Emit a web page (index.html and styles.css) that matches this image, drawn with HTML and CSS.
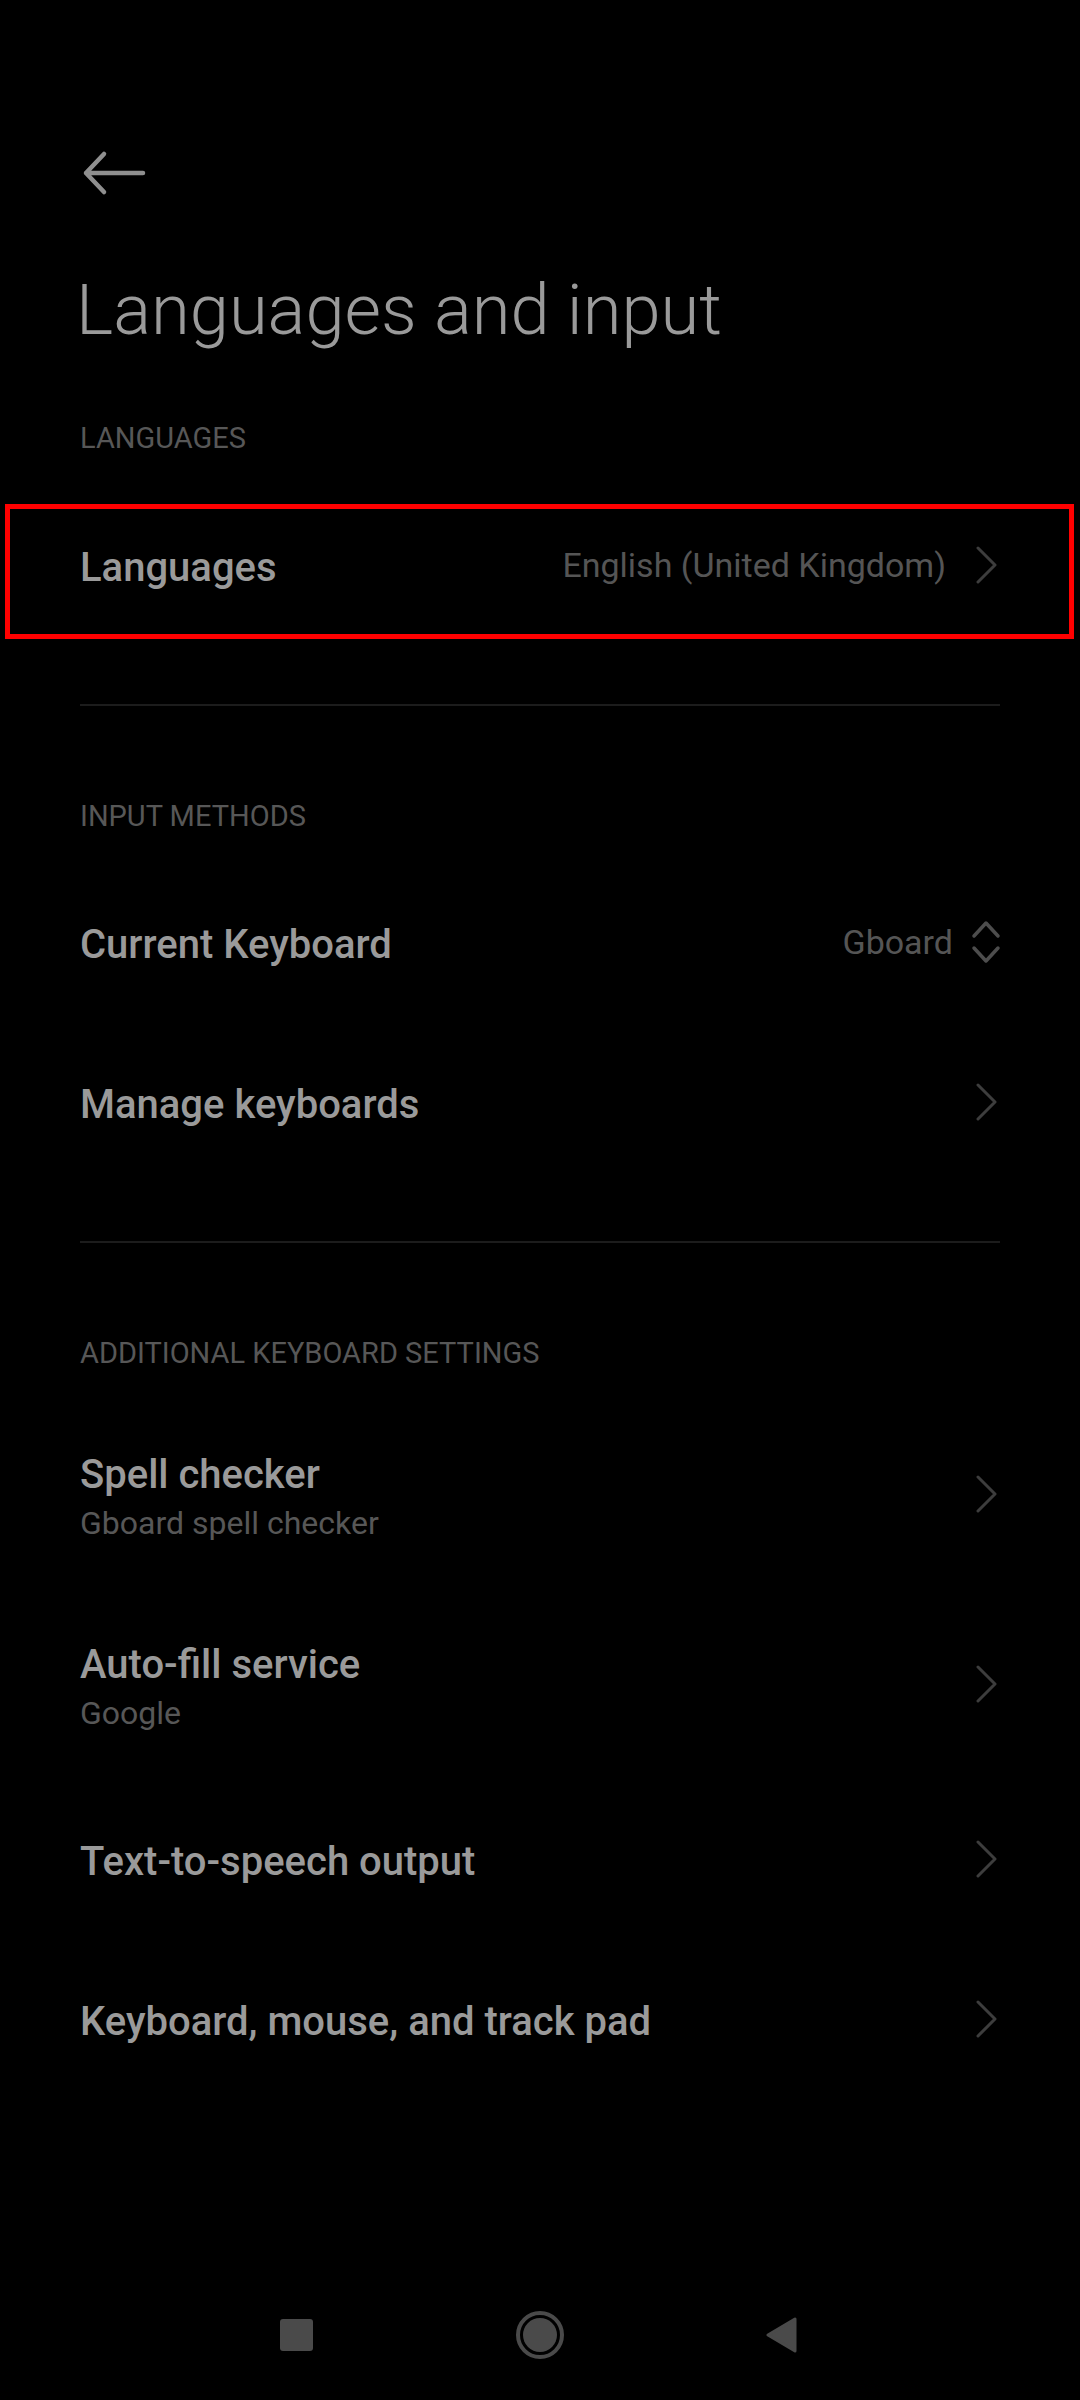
FILE: index.html
```html
<!DOCTYPE html>
<html lang="en">
<head>
  <meta charset="UTF-8" />
  <meta name="viewport" content="width=device-width, initial-scale=1.0"/>
  <title>Languages and input</title>
  <link rel="stylesheet" href="styles.css">
</head>
<body>

<div class="page">
  <div class="toolbar">
    <svg class="back" width="64" height="48" viewBox="0 0 64 48">
      <path d="M22 5 L4 24 L22 43 M4 24 H61" fill="none" stroke="#8f8f8f" stroke-width="4.5" stroke-linecap="round" stroke-linejoin="round"/>
    </svg>
  </div>

  <h1 class="title">Languages and input</h1>

  <div class="group-title first">LANGUAGES</div>
  <div class="row marked">
    <div class="row-text">
      <div class="row-name">Languages</div>
    </div>
    <div class="row-value">English (United Kingdom)</div>
    <svg class="chevron" width="22" height="38" viewBox="0 0 22 38">
      <path d="M2 2 L19 19 L2 36" fill="none" stroke="#3d3d3d" stroke-width="3" stroke-linecap="round" stroke-linejoin="round"/>
    </svg>
  </div>

  <div class="divider"></div>

  <div class="group-title">INPUT METHODS</div>
  <div class="row">
    <div class="row-text">
      <div class="row-name">Current Keyboard</div>
    </div>
    <div class="row-value short">Gboard</div>
    <svg class="updown" width="30" height="44" viewBox="0 0 30 44">
      <path d="M3 16 L15 3 L27 16 M3 28 L15 41 L27 28" fill="none" stroke="#4d4d4d" stroke-width="3.5" stroke-linecap="round" stroke-linejoin="round"/>
    </svg>
  </div>
  <div class="row">
    <div class="row-text">
      <div class="row-name">Manage keyboards</div>
    </div>
    <svg class="chevron" width="22" height="38" viewBox="0 0 22 38">
      <path d="M2 2 L19 19 L2 36" fill="none" stroke="#3d3d3d" stroke-width="3" stroke-linecap="round" stroke-linejoin="round"/>
    </svg>
  </div>

  <div class="divider"></div>

  <div class="group-title">ADDITIONAL KEYBOARD SETTINGS</div>
  <div class="row tall">
    <div class="row-text">
      <div class="row-name">Spell checker</div>
      <div class="row-sub">Gboard spell checker</div>
    </div>
    <svg class="chevron" width="22" height="38" viewBox="0 0 22 38">
      <path d="M2 2 L19 19 L2 36" fill="none" stroke="#3d3d3d" stroke-width="3" stroke-linecap="round" stroke-linejoin="round"/>
    </svg>
  </div>
  <div class="row tall">
    <div class="row-text">
      <div class="row-name">Auto-fill service</div>
      <div class="row-sub">Google</div>
    </div>
    <svg class="chevron" width="22" height="38" viewBox="0 0 22 38">
      <path d="M2 2 L19 19 L2 36" fill="none" stroke="#3d3d3d" stroke-width="3" stroke-linecap="round" stroke-linejoin="round"/>
    </svg>
  </div>
  <div class="row">
    <div class="row-text">
      <div class="row-name">Text-to-speech output</div>
    </div>
    <svg class="chevron" width="22" height="38" viewBox="0 0 22 38">
      <path d="M2 2 L19 19 L2 36" fill="none" stroke="#3d3d3d" stroke-width="3" stroke-linecap="round" stroke-linejoin="round"/>
    </svg>
  </div>
  <div class="row">
    <div class="row-text">
      <div class="row-name">Keyboard, mouse, and track pad</div>
    </div>
    <svg class="chevron" width="22" height="38" viewBox="0 0 22 38">
      <path d="M2 2 L19 19 L2 36" fill="none" stroke="#3d3d3d" stroke-width="3" stroke-linecap="round" stroke-linejoin="round"/>
    </svg>
  </div>

  <div class="navbar">
    <div class="nav-btn"><span class="nav-square"></span></div>
    <div class="nav-btn"><span class="nav-home"><span class="nav-dot"></span></span></div>
    <div class="nav-btn">
      <svg width="36" height="40" viewBox="0 0 36 40">
        <path d="M29 4 L29 36 L2 20 Z" fill="#4a4a4a" stroke="#4a4a4a" stroke-width="3" stroke-linejoin="round"/>
      </svg>
    </div>
  </div>
</div>

</body>
</html>
```

FILE: styles.css
```css
* {
  box-sizing: border-box;
  margin: 0;
  padding: 0;
}

body {
  background-color: #000000;
  color: #9a9a9a;
  font-family: 'Roboto', 'Noto Sans', sans-serif;
}

.page {
  min-height: 2400px;
  display: flex;
  flex-direction: column;
}

.toolbar {
  padding: 149px 0 0 82px;
  height: 197px;
}

.back {
  display: block;
}

.title {
  margin-top: 70px;
  padding-left: 76px;
  font-size: 70.5px;
  font-weight: 300;
  line-height: 86px;
  color: #9a9a9a;
}

.group-title {
  padding: 92px 80px 0;
  margin-bottom: 28px;
  font-size: 29px;
  line-height: 36px;
  color: #575757;
}

.group-title.first {
  padding-top: 67px;
  margin-bottom: 29px;
}

.row {
  position: relative;
  height: 160px;
  padding: 0 80px;
  display: flex;
  align-items: center;
}

.row.tall {
  height: 190px;
}

.row-text {
  flex: 1;
  padding-top: 5px;
}

.row-name {
  font-size: 40px;
  font-weight: 500;
  line-height: 46px;
  color: #9a9a9a;
}

.row-sub {
  margin-top: 6px;
  font-size: 32px;
  line-height: 38px;
  color: #575757;
}

.row-value {
  margin-right: 30px;
  font-size: 34px;
  color: #555555;
}

.row-value.short {
  margin-right: 18px;
}

.chevron {
  display: block;
  margin-right: 2px;
}

.updown {
  display: block;
  margin-right: -1px;
}

/* red highlight box over the Languages row */
.row.marked::after {
  content: "";
  position: absolute;
  left: 5px;
  right: 6px;
  top: 19px;
  bottom: 6px;
  border: 5px solid #ff0000;
}

.divider {
  margin: 59px 80px 0;
  height: 2px;
  background: #1c1c1c;
}

.navbar {
  margin-top: auto;
  height: 130px;
  display: flex;
  justify-content: center;
  align-items: center;
  gap: 184px;
}

.nav-btn {
  width: 60px;
  height: 60px;
  display: flex;
  align-items: center;
  justify-content: center;
}

.nav-square {
  width: 33px;
  height: 32px;
  border-radius: 3px;
  background: #4a4a4a;
}

.nav-home {
  width: 48px;
  height: 48px;
  border: 4px solid #4a4a4a;
  border-radius: 50%;
  display: flex;
  align-items: center;
  justify-content: center;
}

.nav-dot {
  width: 34px;
  height: 34px;
  border-radius: 50%;
  background: #4a4a4a;
}
```
